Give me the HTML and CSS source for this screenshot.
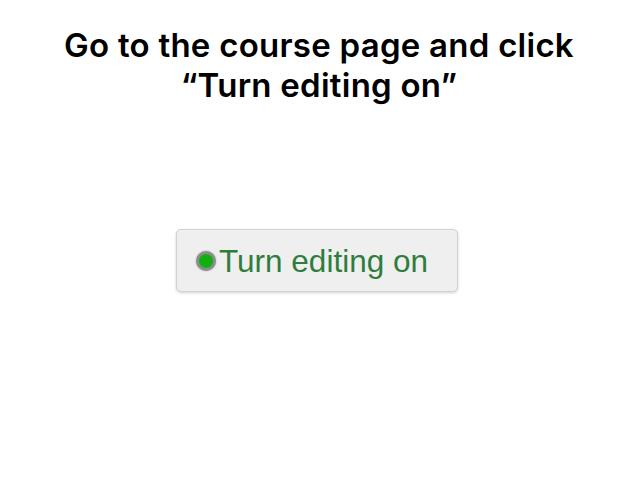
FILE: index.html
```html
<!DOCTYPE html>
<html lang="en">
<head>
  <meta charset="UTF-8" />
  <title>Turn editing on</title>
  <link rel="stylesheet" href="styles.css">
</head>
<body>
  <div class="slide">
    <h1>Go to the course page and click<br>&ldquo;Turn editing on&rdquo;</h1>

    <div class="button-area">
      <div class="edit-button">
        <span class="dot"></span>
        <span class="label">Turn editing on</span>
      </div>
    </div>
  </div>
</body>
</html>
```

FILE: styles.css
```css
html, body {
  margin: 0;
  padding: 0;
  background: #fff;
}

.slide {
  width: 638px;
  height: 478px;
}

h1 {
  margin: 0;
  padding-top: 25px;
  font-family: 'Inter', sans-serif;
  font-weight: 600;
  font-size: 33px;
  line-height: 40px;
  color: #000;
  text-align: center;
  letter-spacing: 0.25px;
}

.button-area {
  padding-top: 124px;
  padding-left: 176px;
}

.edit-button {
  display: flex;
  align-items: center;
  width: 282px;
  height: 63px;
  box-sizing: border-box;
  background: #efefef;
  border: 1px solid #d2d2d2;
  border-radius: 5px;
  box-shadow: 0 1px 3px rgba(0, 0, 0, 0.18);
  padding-left: 19px;
}

.dot {
  width: 14px;
  height: 14px;
  border-radius: 50%;
  background: #11b011;
  border: 3px solid #8c8c8c;
  box-shadow: 0 0 2px #aaa;
}

.label {
  font-family: 'Liberation Sans', Arial, sans-serif;
  font-size: 31.5px;
  color: #2f7d3c;
  margin-left: 3px;
  margin-top: 1px;
}
```
